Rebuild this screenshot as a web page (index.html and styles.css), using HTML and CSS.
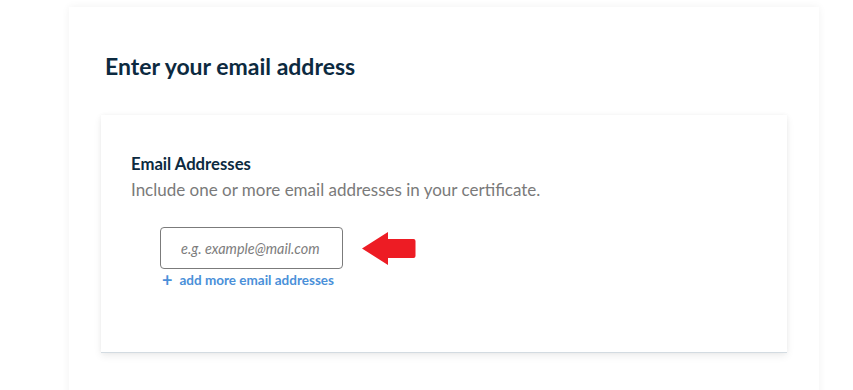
FILE: index.html
```html
<!DOCTYPE html>
<html lang="en">
<head>
<meta charset="utf-8">
<title>Enter your email address</title>
<link rel="stylesheet" href="styles.css">
</head>
<body>
<div class="page">
  <div class="outer-card">
    <h1 class="heading">Enter your email address</h1>
    <div class="inner-card">
      <div class="field-title">Email Addresses</div>
      <div class="field-desc">Include one or more email addresses in your certificate.</div>
      <div class="input-row">
        <input class="email-input" type="text" placeholder="e.g. example@mail.com">
        <svg class="arrow" width="54" height="34" viewBox="0 0 54 34" aria-hidden="true">
          <path d="M0 16.5 L26 0 L26 7 L51.5 7 Q53.5 7 53.5 9 L53.5 24 Q53.5 26 51.5 26 L26 26 L26 33 Z" fill="#ed1c24"/>
        </svg>
      </div>
      <a class="add-more" href="#"><span class="plus">+</span>add more email addresses</a>
    </div>
  </div>
</div>
</body>
</html>
```

FILE: styles.css
```css
html, body {
  margin: 0;
  padding: 0;
  background: #ffffff;
  font-family: Lato, "Open Sans", "Liberation Sans", sans-serif;
}

.page {
  padding: 7px 0 0 69px;
  height: 383px;
  overflow: hidden;
}

.outer-card {
  width: 750px;
  height: 420px;
  background: #ffffff;
  box-shadow: 0 0 8px rgba(0, 0, 0, 0.06);
  padding: 46px 32px 0 32px;
  box-sizing: border-box;
}

.heading {
  margin: 0 0 36px 4px;
  font-size: 23px;
  line-height: 26px;
  font-weight: 700;
  color: #0c2a40;
}

.inner-card {
  background: #ffffff;
  box-shadow: 0 3px 8px rgba(0, 0, 0, 0.07), 0 0 4px rgba(0, 0, 0, 0.04);
  border-bottom: 1px solid #d3dbe1;
  padding: 39px 30px 0 30px;
  height: 238px;
  box-sizing: border-box;
}

.field-title {
  font-size: 16.7px;
  line-height: 20px;
  font-weight: 700;
  color: #0c2a40;
}

.field-desc {
  margin-top: 5px;
  font-size: 17px;
  line-height: 22px;
  color: #7a7a7a;
}

.input-row {
  display: flex;
  align-items: center;
  gap: 19px;
  margin-top: 26px;
  margin-left: 29px;
}

.email-input {
  width: 183px;
  height: 42px;
  box-sizing: border-box;
  border: 1px solid #7b7b7b;
  border-radius: 4px;
  padding: 0 0 0 20px;
  font-family: Lato, "Open Sans", "Liberation Sans", sans-serif;
  font-size: 14.4px;
  font-style: italic;
  color: #333;
  outline: none;
  background: #fff;
}

.email-input::placeholder {
  color: #7d7d7d;
  font-style: italic;
}

.arrow {
  display: block;
  margin-top: 2px;
}

.add-more {
  display: flex;
  align-items: center;
  margin-left: 31px;
  margin-top: 2px;
  font-size: 13.5px;
  line-height: 18px;
  font-weight: 700;
  color: #4a90d9;
  text-decoration: none;
}

.plus {
  font-size: 18px;
  font-weight: 700;
  margin-right: 7px;
  line-height: 18px;
}
```
